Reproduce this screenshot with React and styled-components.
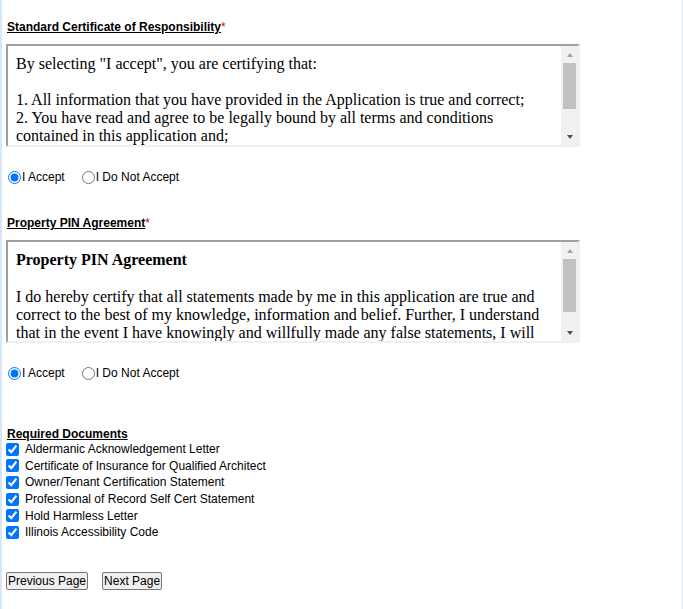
import React from "react";
import styled, { createGlobalStyle } from "styled-components";

const GlobalStyle = createGlobalStyle`
  * { box-sizing: border-box; }
  body {
    margin: 0;
    background: #fff;
    font-family: "Liberation Sans", Arial, sans-serif;
    font-size: 12px;
    color: #000;
  }
`;

const certificateText = `By selecting "I accept", you are certifying that:

1. All information that you have provided in the Application is true and correct;
2. You have read and agree to be legally bound by all terms and conditions contained in this application and;
3. You understand that any false statement may result in the denial or revocation of the permit.`;

const documents = [
  "Aldermanic Acknowledgement Letter",
  "Certificate of Insurance for Qualified Architect",
  "Owner/Tenant Certification Statement",
  "Professional of Record Self Cert Statement",
  "Hold Harmless Letter",
  "Illinois Accessibility Code",
];

const Scrollbar = ({ thumbHeight }) => (
  <Track>
    <ArrowButton>
      <UpArrow />
    </ArrowButton>
    <Thumb style={{ height: thumbHeight }} />
    <TrackRest />
    <ArrowButton>
      <DownArrow />
    </ArrowButton>
  </Track>
);

const Agreement = ({ name, checked }) => (
  <RadioRow>
    <Choice>
      <Radio type="radio" name={name} defaultChecked={checked} />I Accept
    </Choice>
    <Choice>
      <Radio type="radio" name={name} />I Do Not Accept
    </Choice>
  </RadioRow>
);

const App = () => {
  return (
    <>
      <GlobalStyle />
      <Frame>
        <Label>
          Standard Certificate of Responsibility<Required>*</Required>
        </Label>
        <TextBox>
          <TextContent>{certificateText}</TextContent>
          <Scrollbar thumbHeight={46} />
        </TextBox>
        <Agreement name="certificate" checked />

        <Label top={31}>
          Property PIN Agreement<Required>*</Required>
        </Label>
        <TextBox>
          <TextContent>
            <BoxHeading>Property PIN Agreement</BoxHeading>
            I do hereby certify that all statements made by me in this
            application are true and correct to the best of my knowledge,
            information and belief. Further, I understand that in the event I
            have knowingly and willfully made any false statements, I will be
            subject to the penalties provided by law.
          </TextContent>
          <Scrollbar thumbHeight={53} />
        </TextBox>
        <Agreement name="pin" checked />

        <Label top={46}>Required Documents</Label>
        <DocList>
          {documents.map((doc) => (
            <DocRow key={doc}>
              <Checkbox type="checkbox" defaultChecked />
              {doc}
            </DocRow>
          ))}
        </DocList>

        <ButtonBar>
          <PageButton>Previous Page</PageButton>
          <PageButton>Next Page</PageButton>
        </ButtonBar>
      </Frame>
    </>
  );
};

export default App;

const Frame = styled.div`
  min-height: 100vh;
  border-left: 2px solid #d6e7f7;
  border-right: 1px solid #d6e7f7;
  padding: 20px 0 0 4px;
`;

const Label = styled.div`
  margin-top: ${(props) => props.top || 0}px;
  height: 14px;
  line-height: 14px;
  margin-left: 1px;
  font-weight: bold;
  text-decoration: underline;
`;

const Required = styled.span`
  color: #e00;
  font-weight: normal;
  text-decoration: none;
  display: inline-block;
`;

const TextBox = styled.div`
  display: flex;
  width: 574px;
  height: 103px;
  margin-top: 10px;
  border: 2px solid;
  border-color: #a0a0a0 #f0f0f0 #f0f0f0 #a0a0a0;
  background: #fff;
`;

const TextContent = styled.div`
  flex: 1;
  overflow: hidden;
  padding: 9px 9px 0 8px;
  font-family: "Liberation Serif", "Times New Roman", serif;
  font-size: 16px;
  white-space: pre-line;
`;

const BoxHeading = styled.div`
  font-weight: bold;
  margin-bottom: 19px;
`;

const Track = styled.div`
  width: 17px;
  display: flex;
  flex-direction: column;
  background: #f1f1f1;
`;

const ArrowButton = styled.div`
  height: 17px;
  display: flex;
  align-items: center;
  justify-content: center;
`;

const UpArrow = styled.div`
  width: 0;
  height: 0;
  border-left: 3.5px solid transparent;
  border-right: 3.5px solid transparent;
  border-bottom: 4px solid #a3a3a3;
`;

const DownArrow = styled.div`
  width: 0;
  height: 0;
  border-left: 3.5px solid transparent;
  border-right: 3.5px solid transparent;
  border-top: 4px solid #505050;
`;

const Thumb = styled.div`
  margin: 0 2px;
  background: #c1c1c1;
`;

const TrackRest = styled.div`
  flex: 1;
`;

const RadioRow = styled.div`
  display: flex;
  align-items: center;
  gap: 15px;
  height: 16px;
  margin-top: 22px;
`;

const Choice = styled.label`
  display: flex;
  align-items: center;
`;

const Radio = styled.input`
  width: 13px;
  height: 13px;
  margin: 0 1px 0 2px;
`;

const DocList = styled.div`
  display: flex;
  flex-direction: column;
`;

const DocRow = styled.label`
  display: flex;
  align-items: center;
  height: 16.6px;
`;

const Checkbox = styled.input`
  width: 13px;
  height: 13px;
  margin: 0 6px 0 0;
`;

const ButtonBar = styled.div`
  display: flex;
  gap: 14px;
  margin-top: 31px;
`;

const PageButton = styled.button`
  font-family: "Liberation Sans", Arial, sans-serif;
  font-size: 12px;
  height: 18px;
  padding: 0 1px;
  border: 1px solid #767676;
  border-radius: 2px;
  background: #efefef;
  color: #000;
`;
